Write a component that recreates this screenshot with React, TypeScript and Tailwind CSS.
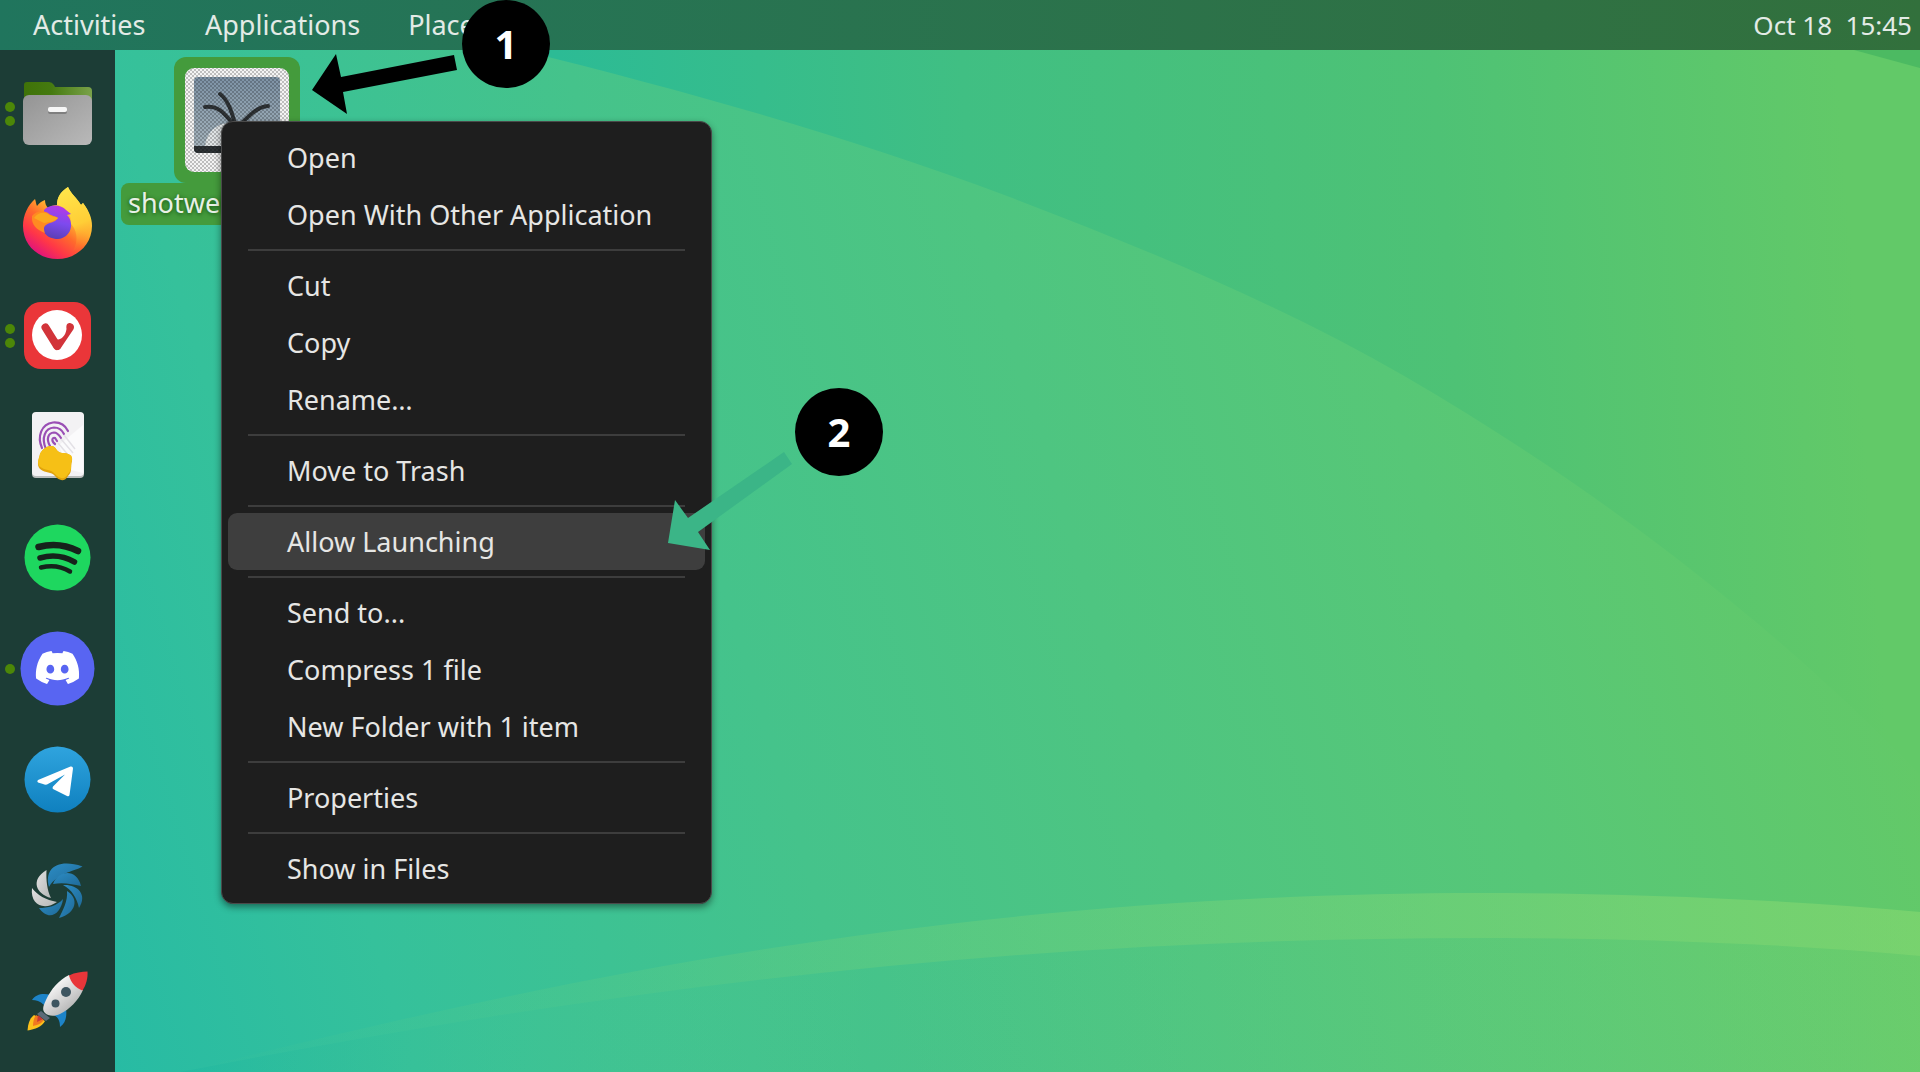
import { FunctionComponent, JSX } from "react";
import { FaDiscord } from "react-icons/fa";

interface DockApp {
  name: string;
  windows: number;
  icon: JSX.Element;
}

const FilesIcon = (): JSX.Element => (
  <svg viewBox="0 0 80 80" className="w-20 h-20">
    <defs>
      <linearGradient id="filesBody" x1="0" y1="0" x2="1" y2="1">
        <stop offset="0" stopColor="#949494" />
        <stop offset="1" stopColor="#b9b9b9" />
      </linearGradient>
      <linearGradient id="filesTab" x1="0" y1="0" x2="1" y2="0">
        <stop offset="0" stopColor="#3f7208" />
        <stop offset="0.4" stopColor="#457a10" />
        <stop offset="1" stopColor="#7aa24a" />
      </linearGradient>
    </defs>
    <path
      d="M7 30V11Q7 8 10 8H32Q35 8 37 11L38 13H71Q75 13 75 17V30Z"
      fill="url(#filesTab)"
    />
    <rect x="6" y="21" width="69" height="50" rx="6" fill="url(#filesBody)" />
    <rect x="31" y="36" width="19" height="4" rx="2" fill="#7f7f7f" />
    <rect x="31" y="33" width="19" height="5" rx="2" fill="#f6f6f6" />
  </svg>
);

const FirefoxIcon = (): JSX.Element => (
  <svg viewBox="0 0 80 80" className="w-20 h-20">
    <defs>
      <linearGradient id="foxBody" x1="0.85" y1="0.1" x2="0.25" y2="0.95">
        <stop offset="0.1" stopColor="#ffe146" />
        <stop offset="0.38" stopColor="#ffb02e" />
        <stop offset="0.58" stopColor="#ff6a2c" />
        <stop offset="0.8" stopColor="#ff3747" />
        <stop offset="1" stopColor="#e2157a" />
      </linearGradient>
      <linearGradient id="foxFlame" x1="0.4" y1="0" x2="0.6" y2="1">
        <stop offset="0" stopColor="#ffe54a" />
        <stop offset="0.6" stopColor="#ffce36" />
        <stop offset="1" stopColor="#ff8a2c" stopOpacity="0" />
      </linearGradient>
      <linearGradient id="foxGlobe" x1="0.6" y1="0" x2="0.4" y2="1">
        <stop offset="0" stopColor="#b638e6" />
        <stop offset="0.5" stopColor="#7d4aee" />
        <stop offset="1" stopColor="#5a3fb4" />
      </linearGradient>
    </defs>
    <path
      d="M18 14C19 17 19 19 20 21C22 18 25 16 28 15C28 18 29 21 31 23C34 21 37 20 40 20C40 13 43 7 51 2C54 9 60 13 64 20L66 18C72 26 75 33 75 41C75 60 59 74 40.500 74C21 74 6 60 6 41C6 30 11 20 18 14Z"
      fill="url(#foxBody)"
    />
    <path
      d="M40 20C40 13 43 7 51 2C54 9 60 13 64 20L66 18C73 27 76 38 72 50C69 59 62 66 56 66C62 56 60 44 53 38C56 30 48 22 40 20Z"
      fill="url(#foxFlame)"
    />
    <path
      d="M27 25C32 19 44 19 49 25L54 29L50 30C58 38 54 53 41 54C29 54 23 45 27 36Z"
      fill="url(#foxGlobe)"
    />
    <path
      d="M15 31C19 26 26 25 31 28C34 31 39 31 41 33C38 38 33 37 29 40C26 42 27 45 28 48C20 45 14 40 15 31Z"
      fill="#ff8a22"
    />
    <path d="M17 33C21 27 27 27 31 29C34 32 38 31 41 33C37 37 32 37 27 38Z" fill="#fba91f" />
  </svg>
);

const VivaldiIcon = (): JSX.Element => (
  <svg viewBox="0 0 80 80" className="w-20 h-20">
    <rect x="7" y="6" width="67" height="67" rx="17" fill="#ea3639" />
    <circle cx="40" cy="39" r="25" fill="#fff" />
    <path d="M28.500 31.500L40 50" stroke="#d2343a" strokeWidth="8" strokeLinecap="round" />
    <path
      d="M33 40C37 46 48 45 49.500 33C49 29 50 27 53 27C57 28 58 31 56 34L43.500 52.500C41 55 38 54 37 52Z"
      fill="#d2343a"
    />
  </svg>
);

const CleanerIcon = (): JSX.Element => (
  <svg viewBox="0 0 80 80" className="w-20 h-20">
    <rect x="15" y="6" width="52" height="65" rx="4" fill="#b9bdbc" />
    <rect x="15" y="5" width="52" height="64" rx="4" fill="#f3f2f4" />
    <path d="M42 38L66 18V66L50 62Z" fill="#fbfbfc" />
    <g fill="none" stroke="#9a4fb5" strokeWidth="2.2" strokeLinecap="round">
      <path d="M25 41C20 30 24 17 36 15.500C43 15 48 18 51 24" />
      <path d="M29 42C24 31 28 21 37 20.500C42 20.500 45 23 47 27" />
      <path d="M33 39C29 32 31 26 37 25.500C40 25.500 42 28 44 31" />
      <path d="M38 37C34 34 35 30 38 31L40 34" />
    </g>
    <g fill="none" stroke="#e3e1e6" strokeWidth="1.500">
      <path d="M47 28L58 42M44 32L56 46M41 36L52 49" />
    </g>
    <path
      d="M33 39C40 38 38 45 45 46C52 46 56 49 55 54C53 60 56 64 51 69C48 75 42 74 38 69C34 64 29 67 23 62C19 57 22 53 23 47C25 43 28 40 33 39Z"
      fill="#e0a30c"
    />
    <path
      d="M33 39C40 38 38 45 45 46C52 46 56 48 55 53C53 58 56 62 51 67C48 73 42 72 38 67C34 62 28 64 22 59C20 55 22 51 23 47C25 43 28 40 33 39Z"
      fill="#f6c016"
    />
  </svg>
);

const SpotifyIcon = (): JSX.Element => (
  <svg viewBox="0 0 80 80" className="w-20 h-20">
    <circle cx="40.500" cy="39.500" r="33" fill="#1ed75f" />
    <g fill="none" stroke="#16221b" strokeLinecap="round">
      <path d="M21.500 29C35 25.500 49 27 61 33" strokeWidth="6.500" />
      <path d="M23 40C35 36.500 47 38 57.500 44" strokeWidth="5.500" />
      <path d="M24 49.500C34 47 44 48 53 53.500" strokeWidth="4.500" />
    </g>
  </svg>
);

const DiscordIcon = (): JSX.Element => (
  <svg viewBox="0 0 80 80" className="w-20 h-20">
    <circle cx="40.500" cy="39.500" r="37" fill="#5865f2" />
    <FaDiscord x={17} y={15} size={47} color="#fff" />
  </svg>
);

const TelegramIcon = (): JSX.Element => (
  <svg viewBox="0 0 80 80" className="w-20 h-20">
    <defs>
      <linearGradient id="telegram" x1="0" y1="0" x2="0" y2="1">
        <stop offset="0" stopColor="#2fa4de" />
        <stop offset="1" stopColor="#0f80bf" />
      </linearGradient>
    </defs>
    <circle cx="40.500" cy="39.500" r="33" fill="url(#telegram)" />
    <path
      d="M21 40L53.500 26.500Q56 26 56 28.500L52.500 55Q52 57 50 56L36 49Q35 48 36 46.500L48 34.500L30 44.500Q28 45 26 44L21 42.500Q19.500 41 21 40Z"
      fill="#fff"
    />
  </svg>
);

const ShutterIcon = (): JSX.Element => (
  <svg viewBox="0 0 80 80" className="w-20 h-20">
    <defs>
      <linearGradient id="blade" x1="0" y1="0" x2="1" y2="1">
        <stop offset="0" stopColor="#2c8cc4" />
        <stop offset="1" stopColor="#1f6a98" />
      </linearGradient>
      <linearGradient id="bladeLight" x1="0" y1="0" x2="1" y2="1">
        <stop offset="0" stopColor="#e2e2e2" />
        <stop offset="1" stopColor="#b4b6b6" />
      </linearGradient>
    </defs>
    <g fill="url(#blade)">
      <path d="M32 36C27 18 40 7 65.500 15.500C56 21 40 22 32 36Z" />
      <path d="M36 33C41 19 60 17 64 35C55 33 46 31 36 33Z" />
      <path d="M46 34C60 33 71 43 62 57C60 47 55 39 46 34Z" />
      <path d="M50 40C62 47 60 62 42 67C46 59 51 50 50 40Z" />
      <path d="M46 48C44 63 32 71 22 57C31 57 40 55 46 48Z" />
    </g>
    <g fill="url(#bladeLight)">
      <path d="M40 51C27 60 13 54 15 37C20 44 29 49 40 51Z" />
      <path d="M34 47C19 43 13 29 29.500 19C29 29 30 39 34 47Z" />
    </g>
  </svg>
);

const RocketIcon = (): JSX.Element => (
  <svg viewBox="0 0 80 80" className="w-20 h-20">
    <defs>
      <linearGradient id="rocket" x1="0.2" y1="0.1" x2="0.8" y2="0.9">
        <stop offset="0.2" stopColor="#f1f1f1" />
        <stop offset="1" stopColor="#adadad" />
      </linearGradient>
    </defs>
    <path d="M15 38C19 32 26 31 34 33L27 43C23 39 19 38 15 38Z" fill="#1d84c8" />
    <path d="M49 46C50 54 49 61 43 65C43 60 42 56 37 53Z" fill="#1d84c8" />
    <path d="M17 53L28 59C25 65 18 67 10.500 68.500C11 61 13 56 17 53Z" fill="#fbc11b" />
    <path d="M19 53L27 58C24 62 20 63 16 64C16 60 17 56 19 53Z" fill="#f07820" />
    <path d="M21 53L26 57L20 60Z" fill="#c93a35" />
    <path d="M24 49L33 56L29 59L20 52Z" fill="#5b6b78" />
    <path
      d="M52 13C42 18 34 27 29 38C26 44 25 48 28 51C31 54 37 55 43 52C53 47 61 39 66 28Z"
      fill="url(#rocket)"
    />
    <path d="M52 13.500C58 10.500 65 9.500 70.500 9.500C71 16 69 23 65.500 28.500C59 26 54 21 52 13.500Z" fill="#e8363a" />
    <circle cx="49" cy="30" r="5" fill="#3d5560" />
    <circle cx="38.500" cy="41.500" r="4" fill="#3d5560" />
  </svg>
);

const ShotwellIcon = (): JSX.Element => (
  <svg viewBox="0 0 126 126" className="w-[126px] h-[126px]">
    <defs>
      <linearGradient id="sky" x1="0" y1="0" x2="0" y2="1">
        <stop offset="0" stopColor="#7d92a5" />
        <stop offset="1" stopColor="#a9b7bf" />
      </linearGradient>
      <pattern id="mesh" width="4" height="4" patternUnits="userSpaceOnUse">
        <rect width="2" height="2" fill="#000" fillOpacity="0.22" />
        <rect x="2" y="2" width="2" height="2" fill="#000" fillOpacity="0.22" />
      </pattern>
    </defs>
    <rect x="11" y="11" width="104" height="104" rx="9" fill="#f4f4f4" />
    <rect x="20" y="20" width="86" height="76" rx="4" fill="url(#sky)" />
    <path d="M31 90C32 76 42 66 56 66H80V90Z" fill="#e2e6e7" />
    <path d="M20 89H106V92Q106 96 102 96H24Q20 96 20 92Z" fill="#2e3336" />
    <g fill="none" stroke="#303437" strokeLinecap="round">
      <path d="M46 37C55 44 58 56 62 70" strokeWidth="4" />
      <path d="M31 50C44 48 50 56 60 68" strokeWidth="4" />
      <path d="M94 49C82 50 74 60 64 70" strokeWidth="4" />
    </g>
    <rect x="11" y="11" width="104" height="104" rx="9" fill="url(#mesh)" />
  </svg>
);

const dockApps: DockApp[] = [
  { name: "Files", windows: 2, icon: <FilesIcon /> },
  { name: "Firefox", windows: 0, icon: <FirefoxIcon /> },
  { name: "Vivaldi", windows: 2, icon: <VivaldiIcon /> },
  { name: "Metadata Cleaner", windows: 0, icon: <CleanerIcon /> },
  { name: "Spotify", windows: 0, icon: <SpotifyIcon /> },
  { name: "Discord", windows: 1, icon: <DiscordIcon /> },
  { name: "Telegram", windows: 0, icon: <TelegramIcon /> },
  { name: "Shutter", windows: 0, icon: <ShutterIcon /> },
  { name: "Rocket", windows: 0, icon: <RocketIcon /> },
];

const menuGroups: string[][] = [
  ["Open", "Open With Other Application"],
  ["Cut", "Copy", "Rename…"],
  ["Move to Trash"],
  ["Allow Launching"],
  ["Send to...", "Compress 1 file", "New Folder with 1 item"],
  ["Properties"],
  ["Show in Files"],
];

const Wallpaper: FunctionComponent = (): JSX.Element => (
  <svg
    viewBox="0 0 1920 1072"
    preserveAspectRatio="none"
    className="absolute inset-0 w-full h-full"
    aria-hidden="true"
  >
    <defs>
      <linearGradient id="low" gradientUnits="userSpaceOnUse" x1="0" y1="1072" x2="1900" y2="500">
        <stop offset="0.05" stopColor="#27bba4" />
        <stop offset="0.2" stopColor="#35c19b" />
        <stop offset="0.42" stopColor="#45c38b" />
        <stop offset="0.77" stopColor="#57c777" />
        <stop offset="0.97" stopColor="#63c968" />
      </linearGradient>
      <linearGradient id="high" gradientUnits="userSpaceOnUse" x1="560" y1="100" x2="1900" y2="0">
        <stop offset="0" stopColor="#2cbb95" />
        <stop offset="0.3" stopColor="#40bf83" />
        <stop offset="0.65" stopColor="#4ec275" />
        <stop offset="0.95" stopColor="#62c968" />
      </linearGradient>
      <linearGradient id="rim" x1="0" y1="0" x2="1" y2="0">
        <stop offset="0" stopColor="#8edc72" stopOpacity="0" />
        <stop offset="1" stopColor="#8edc72" stopOpacity="0.5" />
      </linearGradient>
      <linearGradient id="floor" x1="0" y1="0" x2="1" y2="0">
        <stop offset="0" stopColor="#17b3a0" stopOpacity="0.3" />
        <stop offset="0.4" stopColor="#8edc72" stopOpacity="0" />
        <stop offset="1" stopColor="#8edc72" stopOpacity="0.2" />
      </linearGradient>
    </defs>
    <rect width="1920" height="1072" fill="url(#low)" />
    <path
      d="M400 0L520 50C690 92 850 137 1007 196C1160 254 1290 310 1406 377C1620 502 1790 640 1920 775V0Z"
      fill="url(#high)"
    />
    <path d="M1720 0L1854 50L1920 68V0Z" fill="#4cba62" />
    <path
      d="M180 1072C480 1000 900 893 1485 893C1640 893 1790 900 1920 912V956C1790 944 1640 938 1485 938C1000 938 600 990 180 1072Z"
      fill="url(#rim)"
    />
    <path
      d="M180 1072C600 990 1000 938 1485 938C1640 938 1790 944 1920 956V1072Z"
      fill="url(#floor)"
    />
  </svg>
);

const Dock: FunctionComponent = (): JSX.Element => (
  <nav className="w-[115px] shrink-0 bg-[#1c3d36] pt-2 flex flex-col">
    {dockApps.map((app: DockApp) => (
      <button
        key={app.name}
        aria-label={app.name}
        className="flex flex-row items-center w-full h-[111px] shrink-0 pl-[5px] gap-0.5 cursor-pointer"
      >
        <span className="flex flex-col gap-1 w-2.5">
          {Array.from({ length: app.windows }, (_, index: number) => (
            <span key={index} className="w-2.5 h-2.5 rounded-full bg-[#4c8708]" />
          ))}
        </span>
        {app.icon}
      </button>
    ))}
  </nav>
);

const ContextMenu: FunctionComponent = (): JSX.Element => (
  <div
    role="menu"
    className="absolute left-[221px] top-[121px] w-[491px] pt-[7px] pb-1.5 px-1.5 flex flex-col rounded-xl border border-[#4a4a4a] bg-[#1e1e1e] shadow-[0_3px_7px_rgba(0,0,0,0.45)]"
  >
    {menuGroups.map((group: string[], index: number) => (
      <div key={index} className="flex flex-col">
        {index > 0 && (
          <div className="h-3.5 px-5 flex items-center">
            <div className="w-full h-0.5 bg-[#3d3d3d]" />
          </div>
        )}
        {group.map((label: string) => (
          <button
            key={label}
            role="menuitem"
            className={`h-[57px] pl-[59px] text-left text-[27px] leading-8 text-[#e6e6e4] rounded-[9px] cursor-pointer whitespace-nowrap ${
              label === "Allow Launching" ? "bg-[#3e3e3e]" : ""
            }`}
          >
            {label}
          </button>
        ))}
      </div>
    ))}
  </div>
);

export default function App(): JSX.Element {
  return (
    <div className="relative flex flex-col min-h-screen overflow-hidden font-['Noto_Sans','Open_Sans',sans-serif]">
      <Wallpaper />
      <header className="relative h-[50px] shrink-0 flex items-center justify-between pl-[33px] pr-2 bg-linear-to-r from-[#20755d] to-[#32703c] text-[#e3ebe6] text-[27px] leading-8">
        <div className="flex gap-12">
          <button className="w-31 text-left">Activities</button>
          <button>Applications</button>
          <button>Places</button>
        </div>
        <time className="text-[26px] whitespace-pre">Oct 18  15:45</time>
      </header>
      <div className="relative flex flex-1">
        <Dock />
        <main className="flex-1 flex flex-col items-start pt-[7px] pl-1.5">
          <button className="flex flex-col items-center w-[232px]">
            <span className="rounded-xl bg-[#449b3c]">
              <ShotwellIcon />
            </span>
            <span className="w-full h-[42px] pl-[7px] rounded-lg bg-[#449b3c] text-[#e8f0e6] text-[27px] leading-10 text-left [text-shadow:0_1px_4px_rgba(0,60,0,0.8)]">
              shotwell
            </span>
          </button>
        </main>
      </div>
      <ContextMenu />
      <svg
        viewBox="0 0 150 64"
        className="absolute left-[310px] top-[52px] w-[150px] h-16"
        aria-hidden="true"
      >
        <path d="M2 38L26 2L31 25L144 3L147 18L33 40L37 62Z" fill="#000" />
      </svg>
      <svg
        viewBox="0 0 130 104"
        className="absolute left-[666px] top-[450px] w-[130px] h-[104px]"
        aria-hidden="true"
      >
        <path d="M2 93L9 50L22 68L118 2L126 14L32 82L44 100Z" fill="#3bb587" />
      </svg>
      <div className="absolute left-[462px] top-0 size-[88px] rounded-full bg-black text-white text-[40px] font-bold flex items-center justify-center">
        1
      </div>
      <div className="absolute left-[795px] top-[388px] size-[88px] rounded-full bg-black text-white text-[40px] font-bold flex items-center justify-center">
        2
      </div>
    </div>
  );
}
